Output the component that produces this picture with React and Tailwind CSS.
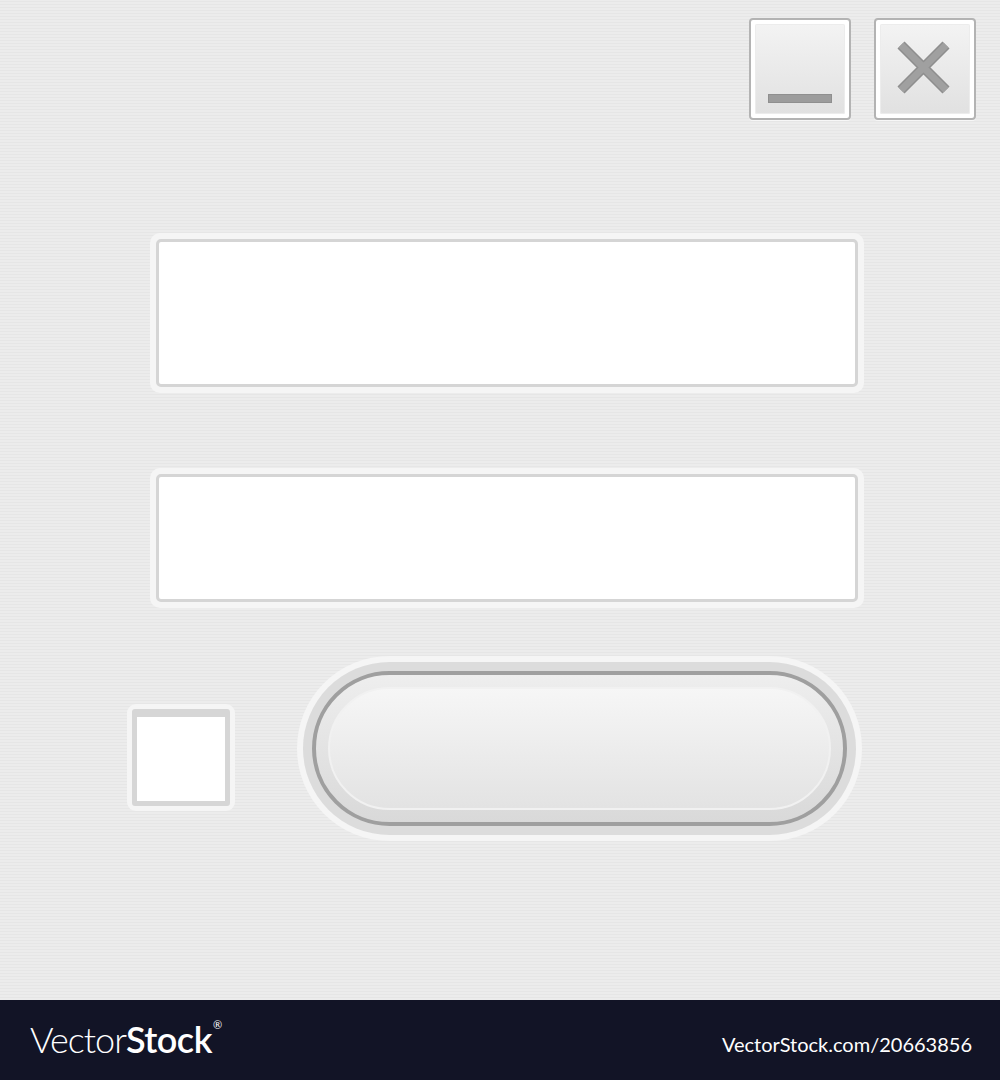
import React from "react";

const WindowButton = ({ children }) => (
  <div className="w-[102px] h-[102px] rounded-[4px] border-2 border-[#b3b3b3] bg-white p-[4px] shadow-[0_1px_0_#f7f7f7]">
    <div className="relative w-full h-full rounded-[2px] bg-gradient-to-b from-[#f3f3f3] to-[#e1e1e1] shadow-[inset_0_0_0_1px_#ececec]">
      {children}
    </div>
  </div>
);

const Field = ({ height }) => (
  <div className={`w-[714px] ${height} rounded-[10px] bg-[#f5f5f5] p-[6px]`}>
    <div className="w-full h-full rounded-[5px] border-[3px] border-[#d5d5d5] bg-white" />
  </div>
);

export default function App() {
  return (
    <div className="w-[1000px] h-[1080px] flex flex-col" style={{ fontFamily: "Lato, 'Open Sans', sans-serif" }}>
      <div className="h-[1000px] flex flex-col bg-[repeating-linear-gradient(0deg,#ececec_0px,#ececec_2px,#e6e6e6_2px,#e6e6e6_3px)]">
        <div className="flex justify-end gap-[23px] pt-[18px] pr-[24px]">
          <WindowButton>
            <div className="absolute left-[13px] bottom-[11px] w-[64px] h-[9px] bg-[#9c9c9c] shadow-[inset_0_0_0_1px_#8f8f8f]" />
          </WindowButton>
          <WindowButton>
            <svg className="absolute left-[16px] top-[16px]" width="55" height="55" viewBox="0 0 55 55">
              <path d="M5 5 L50 50 M50 5 L5 50" stroke="#8e8e8e" strokeWidth="10" strokeLinecap="butt" />
              <path d="M5 5 L50 50 M50 5 L5 50" stroke="#a0a0a0" strokeWidth="7" strokeLinecap="butt" />
            </svg>
          </WindowButton>
        </div>

        <div className="pl-[150px] mt-[113px] flex flex-col gap-[75px]">
          <Field height="h-[160px]" />
          <Field height="h-[140px]" />
        </div>

        <div className="flex items-start pl-[127px] mt-[48px] gap-[62px]">
          <div className="mt-[48px] w-[108px] h-[107px] rounded-[9px] bg-[#f5f5f5] p-[5px]">
            <div className="w-full h-full rounded-[3px] border-[5px] border-t-[8px] border-[#d6d6d6] bg-white" />
          </div>
          <div className="w-[565px] h-[185px] rounded-full bg-[#f5f5f5] p-[6px]">
            <div className="w-full h-full rounded-full bg-[#dcdcdc] p-[9px]">
              <div className="w-full h-full rounded-full border-[4px] border-[#9f9f9f] bg-gradient-to-b from-[#eeeeee] to-[#d9d9d9] p-[12px]">
                <div className="w-full h-full rounded-full border-2 border-[#f1f1f1] bg-gradient-to-b from-[#f6f6f6] to-[#e3e3e3]" />
              </div>
            </div>
          </div>
        </div>
      </div>

      <div className="h-[80px] bg-[#121426] flex items-center justify-between pl-[30px] pr-[28px] text-white">
        <div className="flex items-start leading-none -mt-[2px]">
          <span className="text-[36px] font-light tracking-[-1px]">Vector</span>
          <span className="text-[36px] font-semibold tracking-[-0.5px]">Stock</span>
          <span className="text-[11px] ml-[1px] -mt-[2px]">®</span>
        </div>
        <div className="text-[20px] mt-[8px] leading-none">VectorStock.com/20663856</div>
      </div>
    </div>
  );
}
